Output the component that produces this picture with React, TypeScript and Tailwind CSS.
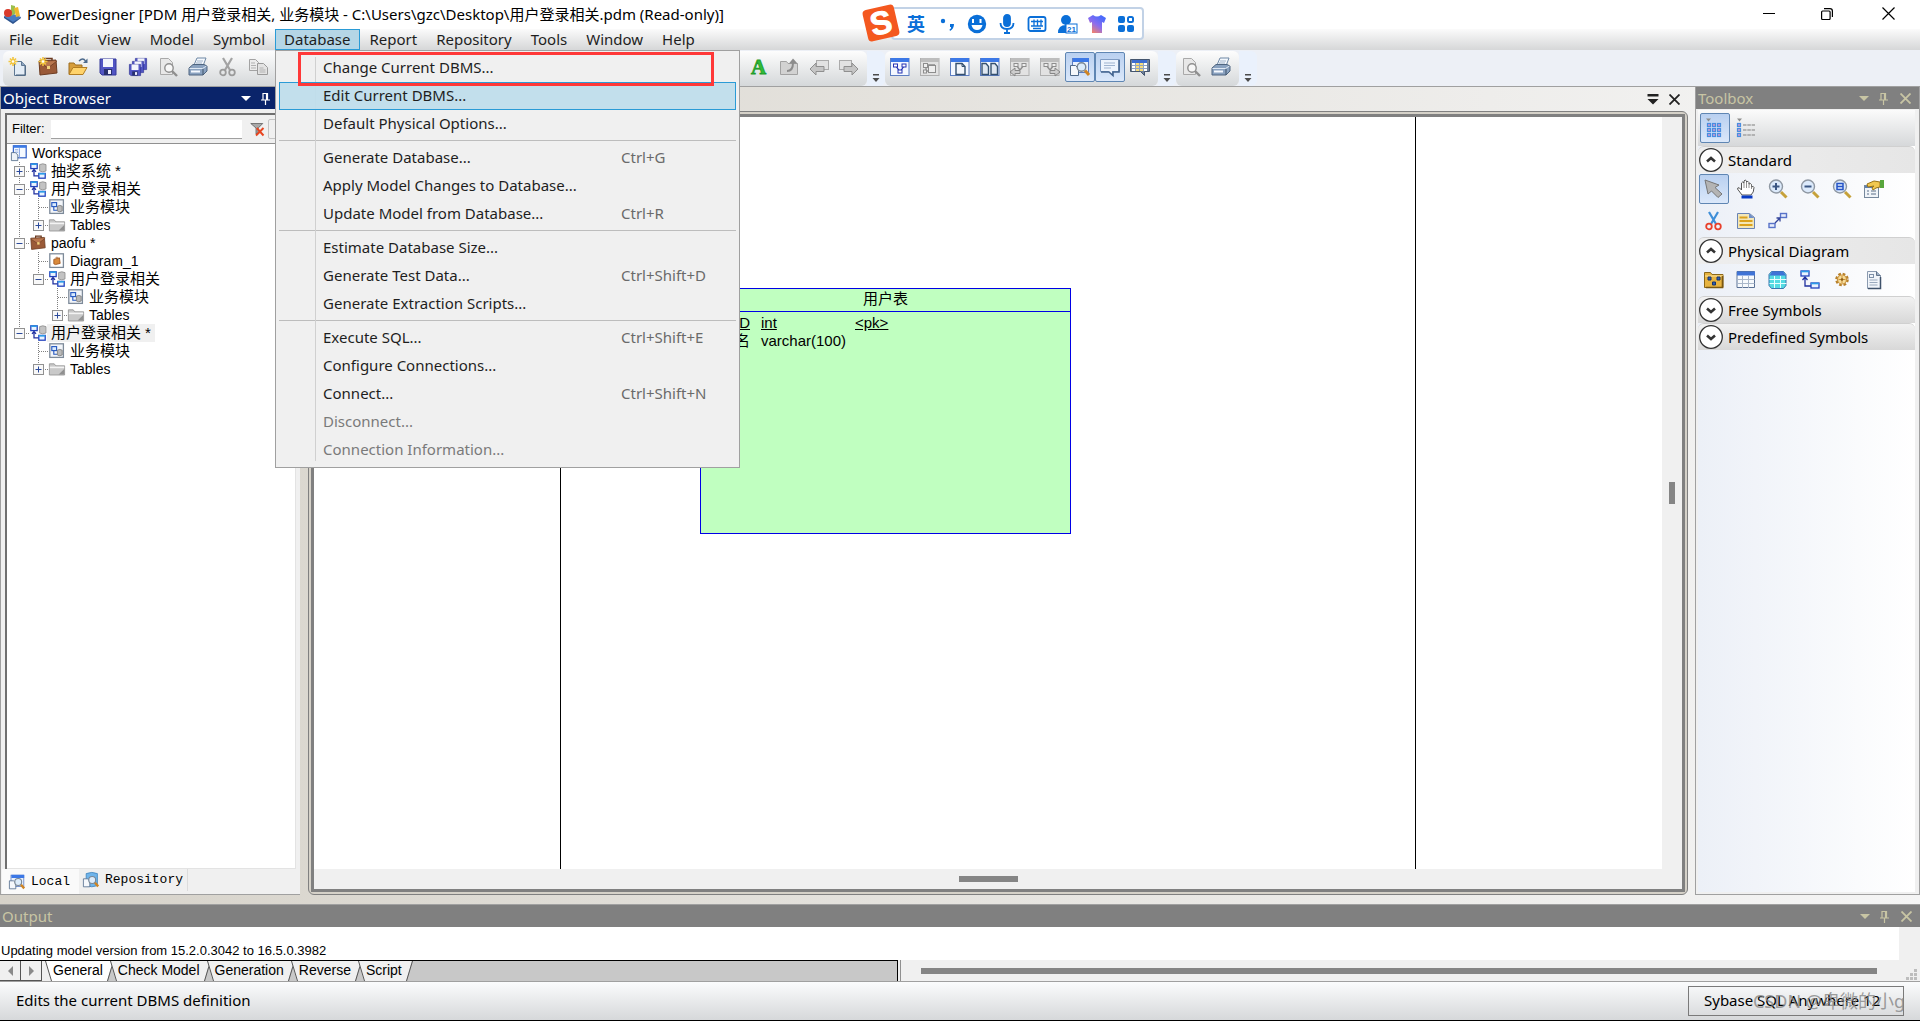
import type { ReactNode } from 'react';

const UI = "font-['Noto_Sans','Noto_Sans_CJK_SC',sans-serif]";
const ARIAL = "font-['Liberation_Sans','Noto_Sans_CJK_SC',sans-serif]";

/* ---------- icons ---------- */

function Svg({ children, size = 20 }: { children: ReactNode; size?: number }) {
  return (
    <svg width={size} height={size} viewBox="0 0 20 20" fill="none" className="shrink-0 overflow-visible">
      {children}
    </svg>
  );
}

const Spark = () => (
  <g stroke="#f2c53d" strokeWidth="1.600">
    <path d="M5 0v9M0.500 4.500h9M2 1.500l6 6M8 1.500l-6 6" />
    <circle cx="5" cy="4.500" r="1.300" fill="#fff" stroke="none" />
  </g>
);

const AppLogo = () => (
  <Svg size={20}>
    <path d="M2 12l7-3 10 4-8 6z" fill="#4a7cc0" />
    <path d="M2 12v2l9 6 8-6v-1l-8 5z" fill="#2d548f" />
    <path d="M9 1l4 1v8l-4 2z" fill="#9bbf4e" />
    <path d="M12 4l4-1 2 9-4 1z" fill="#f0b92e" />
    <circle cx="6" cy="9" r="4" fill="#d93a2b" />
  </Svg>
);

const NewDoc = () => (
  <Svg>
    <path d="M6.500 4.500h7l4 4v10h-11z" fill="#e4edf6" stroke="#5f7893" />
    <path d="M13.500 4.500v4h4" fill="#8fa6c0" stroke="#5f7893" />
    <path d="M17 9v9H8" stroke="#4a637f" />
    <Spark />
  </Svg>
);

function Case({ spark = false, size = 20 }: { spark?: boolean; size?: number }) {
  return (
    <Svg size={size}>
      <path d="M7 4V1.500h7V4" stroke="#6b3a20" strokeWidth="1.500" />
      <path d="M1 4l17-1 1 13-17 2z" fill="#9a5a38" stroke="#6d3c22" />
      <path d="M1 5l9 6 9-7" fill="#b9774f" stroke="#6d3c22" strokeWidth="0.800" />
      <rect x="9" y="9" width="3" height="3" fill="#f1d27c" />
      {spark && <Spark />}
    </Svg>
  );
}

const OpenFolder = () => (
  <Svg>
    <path d="M1 17V6h5l1.500 2H14v3" fill="#d69d3b" stroke="#9c6d1e" />
    <path d="M1 17.500l4-7h14l-4 7z" fill="#ffd36b" stroke="#b27d22" />
    <path d="M11 4q4-4 6.500 0" stroke="#4d6a8c" strokeWidth="1.400" />
    <path d="M19.500 1.500v4.500h-4.500z" fill="#4d6a8c" />
  </Svg>
);

const Floppy = () => (
  <>
    <path d="M2 2h16v16H4l-2-2z" fill="#5155c4" stroke="#34389a" />
    <rect x="5" y="2" width="10" height="8" fill="#f3f5fc" />
    <rect x="6" y="12" width="8" height="6" fill="#27306e" />
    <rect x="10" y="13" width="3" height="4" fill="#eef" />
  </>
);

const Save = () => (
  <Svg>
    <Floppy />
  </Svg>
);

const SaveAll = () => (
  <Svg>
    <g transform="translate(6 0) scale(.7)">
      <Floppy />
    </g>
    <g transform="translate(3 3) scale(.7)">
      <Floppy />
    </g>
    <g transform="translate(0 6) scale(.7)">
      <Floppy />
    </g>
  </Svg>
);

const Preview = () => (
  <Svg>
    <path d="M2.500 1.500h8l4 4v12h-12z" fill="#e8e8e8" stroke="#a9a9a9" />
    <circle cx="11" cy="11" r="4.200" fill="#f7f7f7" stroke="#8f8f8f" strokeWidth="1.400" />
    <path d="M14 14l5 5" stroke="#8f8f8f" strokeWidth="2.400" />
  </Svg>
);

const Printer = () => (
  <Svg>
    <path d="M6 8l3-7h9l-3 8z" fill="#f4f8fd" stroke="#6f88a5" />
    <path d="M9 4h6M8 6h6" stroke="#9fb2c9" />
    <path d="M1 11l4-3.500h11L19 9v5l-4 4H1z" fill="#8aa2c0" stroke="#4e6580" />
    <path d="M1.500 11.500h13l4-2.500" stroke="#dfe9f5" />
    <path d="M3 14.500h9" stroke="#f5f9ff" strokeWidth="2" />
    <path d="M15 12v6" stroke="#3e5269" />
  </Svg>
);

function Scissors({ blade = '#a3a3a3', handle = '#9b9b9b' }: { blade?: string; handle?: string }) {
  return (
    <Svg>
      <path d="M5 1l7 12M14 1L7 13" stroke={blade} strokeWidth="2.200" />
      <circle cx="5" cy="15.500" r="2.800" stroke={handle} strokeWidth="1.800" />
      <circle cx="14" cy="15.500" r="2.800" stroke={handle} strokeWidth="1.800" />
    </Svg>
  );
}

const Copy = () => (
  <Svg>
    <path d="M1.500 2.500h6l3 3v8h-9z" fill="#ececec" stroke="#a3a3a3" />
    <path d="M9.500 6.500h6l4 4v7h-10z" fill="#e3e3e3" stroke="#9a9a9a" />
    <path d="M3 6h4M3 8.500h5M3 11h5M11.500 11h4M11.500 13h6M11.500 15h6" stroke="#b1b1b1" />
  </Svg>
);

const FontA = () => (
  <Svg>
    <text x="2" y="17" fontSize="21" fontWeight="700" fontFamily="Liberation Serif" fill="#2fbd38" stroke="#1f9a29" strokeWidth="0.800">
      A
    </text>
  </Svg>
);

const FolderUp = () => (
  <Svg>
    <path d="M1.500 4.500h6l1.500 2h9.500v11h-17z" fill="#d2d2d2" stroke="#a2a2a2" />
    <path d="M8 14q6 0 6-8" stroke="#8c8c8c" strokeWidth="2" />
    <path d="M10 6.500l4-5 4.500 5z" fill="#8c8c8c" />
  </Svg>
);

function Shift({ flip = false }: { flip?: boolean }) {
  return (
    <Svg>
      <g transform={flip ? 'matrix(-1 0 0 1 20 0)' : undefined}>
        <rect x="7.500" y="3.500" width="12" height="9" fill="#e2e2e2" stroke="#ababab" />
        <path d="M1 12l6-6v3.500h8v5H7V18z" fill="#c5c5c5" stroke="#8f8f8f" />
      </g>
    </Svg>
  );
}

function Win({ gray = false, children }: { gray?: boolean; children?: ReactNode }) {
  return (
    <Svg>
      <rect x="0.500" y="1.500" width="18.500" height="17" fill={gray ? '#e2e2e2' : '#f4f8ff'} stroke={gray ? '#b0b0b0' : '#5d7ec2'} />
      <rect x="1" y="1" width="18" height="4" fill={gray ? '#bdbdbd' : '#3c78e6'} />
      {children}
    </Svg>
  );
}

const WinDiagram = () => (
  <Win>
    <path d="M6 9l4 6M14 9l-4 6" stroke="#2332b4" strokeWidth="1.300" />
    <rect x="3.500" y="7" width="4" height="3" fill="#fff" stroke="#2332b4" />
    <rect x="12" y="7" width="4" height="3" fill="#fff" stroke="#2332b4" />
    <rect x="8" y="13" width="4" height="3" fill="#fff" stroke="#2332b4" />
  </Win>
);

const WinGrid = () => (
  <Win gray>
    <path d="M5 8h10M5 14h10M6 8v7M14 8v7" stroke="#8d8d8d" strokeWidth="1.300" />
    <rect x="3.500" y="6.500" width="4" height="4" fill="#eee" stroke="#8d8d8d" />
    <rect x="3.500" y="13" width="3" height="3" fill="#eee" stroke="#8d8d8d" />
    <rect x="8.500" y="8.500" width="7" height="7" fill="#eee" stroke="#8d8d8d" />
  </Win>
);

const WinPage = () => (
  <Win>
    <path d="M6 6.500h6l3 3v8H6z" fill="#f3f6fb" stroke="#34506f" strokeWidth="1.400" />
    <path d="M12 6.500v3h3" stroke="#34506f" />
  </Win>
);

const WinPages = () => (
  <Win>
    <path d="M2 6.500h4l2.500 3v8H2zM11 6.500h4l2.500 3v8H11z" fill="#dfe7f1" stroke="#34506f" strokeWidth="1.400" />
  </Win>
);

function WinArrow({ flip = false }: { flip?: boolean }) {
  return (
    <Win gray>
      <path d="M6 8l4 5M14 8l-4 5" stroke="#8d8d8d" strokeWidth="1.400" />
      <rect x="4" y="6.500" width="4" height="3" fill="#eee" stroke="#8d8d8d" />
      <rect x="12" y="6.500" width="4" height="3" fill="#eee" stroke="#8d8d8d" />
      <g transform={flip ? 'matrix(-1 0 0 1 20 0)' : undefined}>
        <path d="M0 15l5-4v2.500h5v3H5V19z" fill="#cdcdcd" stroke="#868686" />
      </g>
    </Win>
  );
}

function Magnify({ barrel = false, size = 20 }: { barrel?: boolean; size?: number }) {
  return (
    <Svg size={size}>
      {barrel ? (
        <path d="M4 2q7-3 14 0v15q-7 3-14 0z" fill="#6fb4ea" stroke="#3d83bd" />
      ) : (
        <>
          <rect x="2.500" y="1.500" width="16" height="14" fill="#eaf1fc" stroke="#5d7ec2" />
          <rect x="3" y="1" width="16" height="4" fill="#3c78e6" />
        </>
      )}
      <path d="M0.500 8.500h5l3 3v7h-8z" fill="#f5f8fc" stroke="#4f6a8a" />
      <circle cx="11.500" cy="10" r="4.300" fill="#dcecfb" stroke="#7a8794" strokeWidth="1.400" />
      <path d="M15 13.500l4 4.500" stroke="#cf8424" strokeWidth="3" />
    </Svg>
  );
}

const Note = () => (
  <Svg>
    <path d="M0.500 2.500h19v12h-7v4l-4-4h-8z" fill="#eef4fd" stroke="#7f9cc4" />
    <path d="M19 3v12h-6v3.500l-4-3.500H1" stroke="#44648f" strokeWidth="1.600" />
    <path d="M4 6h11M4 8.500h11M4 11h7" stroke="#9fb3cf" />
  </Svg>
);

const SheetTable = () => (
  <Svg>
    <path d="M0.500 2.500h19v12h-5v4l-4-4H.5z" fill="#6f8099" stroke="#44556d" />
    <rect x="2" y="3" width="15" height="11" fill="#fff" />
    <rect x="2" y="3" width="15" height="3" fill="#3d6dd0" />
    <path d="M6 6h7v8H6z" fill="#f6dc7d" />
    <path d="M2 8.500h15M2 11.500h15M5.500 6v8M9.500 6v8M13.500 6v8" stroke="#8fa4c4" />
  </Svg>
);

function PdmModel({ size = 16 }: { size?: number }) {
  return (
    <Svg size={size}>
      <path d="M12 2q4-2 8 0v8q-4 2-8 0z" fill="#c3c3c3" stroke="#8b8b8b" />
      <rect x="1" y="1" width="8" height="6" fill="#e9f3ff" stroke="#2141bd" strokeWidth="1.600" />
      <path d="M1 1.500h8" stroke="#2c9be8" strokeWidth="2" />
      <path d="M5 8v8h6M2.500 11L5 8l2.500 3" stroke="#20309f" strokeWidth="1.600" />
      <rect x="11" y="13" width="8" height="6" fill="#e9f3ff" stroke="#2141bd" strokeWidth="1.600" />
      <path d="M11 13.500h8" stroke="#2c9be8" strokeWidth="2" />
    </Svg>
  );
}

const DiagramIcon = () => (
  <Svg size={16}>
    <rect x="1" y="1" width="17" height="17" fill="#f2f5f9" stroke="#7d8a99" strokeWidth="1.600" />
    <rect x="3.500" y="4.500" width="6" height="5" fill="#d9ebff" stroke="#2457c0" strokeWidth="1.400" />
    <path d="M6 10v4h4" stroke="#2457c0" strokeWidth="1.400" />
    <path d="M10.500 9q3-2 6 0v6q-3 2-6 0z" fill="#b9b9b9" stroke="#777" />
  </Svg>
);

const CaseDiagram = () => (
  <Svg size={16}>
    <rect x="1" y="1" width="17" height="17" fill="#fff" stroke="#7d8a99" strokeWidth="1.600" />
    <path d="M6 8l7-2 1 7-6 1.500-2-1z" fill="#d98a3c" stroke="#9a4e17" />
    <path d="M8 6.500q1-2 3-1" stroke="#9a4e17" />
  </Svg>
);

const GrayFolder = () => (
  <Svg size={16}>
    <path d="M0.500 17.500V3.500h6l2 2.500h11v11.500z" fill="#c9c9c9" stroke="#8f8f8f" />
    <path d="M1 8h18" stroke="#f3f3f3" strokeWidth="2" />
    <path d="M12 17l7-7v7z" fill="#909090" />
  </Svg>
);

const WorkspaceIcon = () => (
  <Svg size={16}>
    <rect x="3" y="1" width="16" height="15" fill="#f6faff" stroke="#3b67c9" strokeWidth="1.600" />
    <path d="M3 2h16" stroke="#3b7be6" strokeWidth="3" />
    <path d="M10.500 4v12M5 6h4M5 9h4" stroke="#7d9ede" strokeWidth="1.200" />
    <path d="M0.500 9.500h5l3 3v7h-8z" fill="#eef3f8" stroke="#4a6583" />
  </Svg>
);

const FilterOff = () => (
  <Svg size={15}>
    <path d="M1 2h16l-6 6v6l-3 2V8z" fill="#a8a8a8" stroke="#5a5a5a" />
    <path d="M9 8l9 10M18 8L8 18" stroke="#e8451f" strokeWidth="2.600" />
  </Svg>
);

const Cursor = () => (
  <Svg>
    <path d="M1 1l3 14 3.500-3 6.500 6.500 4-3.500-7-6.500L15 6z" fill="#b4b4b4" stroke="#767676" />
  </Svg>
);

const Hand = () => (
  <Svg>
    <path
      d="M6 16L1.500 10q0-2 2-1L5.500 11V4q1-2 2.500 0V2q1-2 2.500 0v1q1.500-1.500 2.500.500V5q2-1 2.500.500V8q2-1.500 2.500.500 0 5-3 7.500z"
      fill="#fff"
      stroke="#555"
    />
    <path d="M8 4v5M10.500 3v6M13 4v5M15.500 6v4" stroke="#777" strokeWidth="0.800" />
    <path d="M5.500 16.500h11v3h-11z" fill="#0a3bc4" />
  </Svg>
);

function Zoom({ mode }: { mode: 'in' | 'out' | 'fit' }) {
  return (
    <Svg>
      <path d="M13 13l5.500 5.500" stroke="#c6a13a" strokeWidth="3" />
      <circle cx="8" cy="7.500" r="6.500" fill="#dceafb" stroke="#8f98a3" strokeWidth="1.400" />
      {mode === 'fit' ? (
        <path d="M5 4.500h6v6H5zM5 7.500h6" stroke="#2554c7" strokeWidth="1.500" />
      ) : (
        <path d="M4.500 7.500h7" stroke="#3a5683" strokeWidth="2" />
      )}
      {mode === 'in' && <path d="M8 4v7" stroke="#3a5683" strokeWidth="2" />}
    </Svg>
  );
}

const Props = () => (
  <Svg>
    <rect x="0.500" y="6.500" width="14" height="12" fill="#f0f4f9" stroke="#76889d" />
    <path d="M1 8h14" stroke="#5e7fae" strokeWidth="2" />
    <path d="M3 12h2M3 15h2M7 12h5M7 15h5" stroke="#8c9bad" strokeWidth="1.400" />
    <path d="M3 5l7-3 6 1v5l-4 1-3 2-1-2 2-2-6 1z" fill="#f2c84f" stroke="#9b7417" />
    <rect x="16" y="1" width="4" height="8" fill="#58a63c" />
  </Svg>
);

const FileText = () => (
  <Svg>
    <path d="M1.500 2.500h12l5 4v11h-17z" fill="#f3e7b8" stroke="#6883b5" />
    <path d="M13 2.500v4.500h5.500z" fill="#6f8fca" />
    <path d="M3.500 6.500h8M3.500 10h13M3.500 14h13" stroke="#dba21d" strokeWidth="1.800" />
  </Svg>
);

const LinkIcon = () => (
  <Svg>
    <rect x="12.500" y="2.500" width="6" height="4" fill="#e6ecfb" stroke="#5872c8" strokeWidth="1.400" />
    <rect x="1" y="12.500" width="6" height="4" fill="#e6ecfb" stroke="#5872c8" strokeWidth="1.400" />
    <path d="M7 12l5-5M8.500 7H12v3.500" stroke="#33449a" strokeWidth="1.300" />
  </Svg>
);

const PackageIcon = () => (
  <Svg>
    <path d="M0.500 17.500v-15h6l1.500 2h11v13z" fill="#e8b440" stroke="#8c6718" />
    <path d="M1 6h18" stroke="#fbe3a0" />
    <path d="M18.500 6v11.500H2" stroke="#7a5812" strokeWidth="1.600" />
    <path d="M4 7h3v3H4zM13 7h3v3h-3zM8.500 12h3v3h-3z" fill="#2f5eb5" stroke="#1b3468" />
  </Svg>
);

function TableIcon({ view = false }: { view?: boolean }) {
  return (
    <Svg>
      <path
        d={view ? 'M3.500 1.500h12l2.500 3v11l-2.500 3h-12l-2.500-3v-11z' : 'M1 1.500h17.500v16H1z'}
        fill={view ? '#54dbe2' : '#f7fafd'}
        stroke={view ? '#3b75ae' : '#5b7296'}
      />
      <path d={view ? 'M4 1.500h11l3 4H1.500z' : 'M1 1.500h18v4H1z'} fill="#3f73d6" />
      <path d="M1.500 9.500h17M1.500 13.500h17M6.500 6v12M12.500 6v12" stroke={view ? '#e6ffff' : '#a9b7ca'} />
    </Svg>
  );
}

const Reference = () => (
  <Svg>
    <rect x="1" y="1" width="8" height="5" fill="#e9f3ff" stroke="#2141bd" strokeWidth="1.300" />
    <path d="M1 1.500h8" stroke="#2c9be8" strokeWidth="1.600" />
    <path d="M5 7v9h6M2.500 10L5 7l2.500 3" stroke="#20309f" strokeWidth="1.300" />
    <rect x="11" y="13" width="8" height="5" fill="#e9f3ff" stroke="#2141bd" strokeWidth="1.300" />
    <path d="M11 13.500h8" stroke="#2c9be8" strokeWidth="1.600" />
  </Svg>
);

const Gear = () => (
  <Svg>
    <circle cx="10" cy="9.500" r="5.500" stroke="#b67f2a" strokeWidth="2.600" strokeDasharray="2.600 1.720" />
    <circle cx="10" cy="9.500" r="4.500" fill="#f8dd9a" stroke="#c8913a" strokeWidth="1.200" />
    <path d="M10 6v7M6.500 9.500h7" stroke="#c8913a" />
    <circle cx="10" cy="9.500" r="1.300" fill="#8c5c16" />
  </Svg>
);

const FileIcon = () => (
  <Svg>
    <path d="M3.500 1.500h9l4 4v13h-13z" fill="#f1f5fa" stroke="#8b9bb0" />
    <path d="M12.500 1.500v4h4" fill="#9db0c6" stroke="#64748a" />
    <rect x="5.500" y="4.500" width="4" height="3" stroke="#7e90a8" />
    <path d="M5.500 10h8M5.500 12.500h8M5.500 15h8" stroke="#9aa9bd" />
    <path d="M16.500 7v11.500H4" stroke="#3f526b" strokeWidth="1.500" />
  </Svg>
);

function Dots({ list = false }: { list?: boolean }) {
  const cols = list ? [1] : [2, 7, 12];
  return (
    <Svg>
      <path d="M1 0.500h5l-2.500 3z" fill="#8d8d8d" />
      {[5, 10, 15].map((y) => (
        <g key={y}>
          {cols.map((x) => (
            <rect key={x} x={x + 0.5} y={y + 0.5} width="3" height="3" fill="#c99ad0" stroke="#4a8ee0" strokeWidth="1.200" />
          ))}
          {list && <path d={`M7 ${y + 2}h12`} stroke="#a2a2a2" strokeWidth="1.600" strokeDasharray="3.500 .8" />}
        </g>
      ))}
    </Svg>
  );
}

const Caret = () => (
  <svg width="10" height="5" viewBox="0 0 10 5" fill="currentColor">
    <path d="M0 0h10L5 5z" />
  </svg>
);

const Pin = () => (
  <svg width="9" height="13" viewBox="0 0 9 13" fill="none" stroke="currentColor">
    <path d="M2 1.500h4.500M2 1v6.500M5.500 1v6.500M6.500 1v6.500M0 8h9M4.500 8v5" strokeWidth="1.200" />
  </svg>
);

const Cross = () => (
  <svg width="11" height="11" viewBox="0 0 11 11" fill="none" stroke="currentColor" strokeWidth="1.800">
    <path d="M0.500 0.500l10 10M10.500 0.500l-10 10" />
  </svg>
);

/* ---------- title, menu and tool bars ---------- */

function TitleBar() {
  return (
    <header className="h-[29px] shrink-0 bg-white flex items-center pl-0.5 pb-0.5 gap-[5px]">
      <AppLogo />
      <h1 className="text-[15px] leading-5 whitespace-nowrap">
        PowerDesigner [PDM 用户登录相关, 业务模块 - C:\Users\gzc\Desktop\用户登录相关.pdm (Read-only)]
      </h1>
      <div className="ml-auto flex items-center">
        <button aria-label="Minimize" className="w-[58px] h-7 flex items-center justify-center">
          <svg width="12" height="12" stroke="#000">
            <path d="M0 5.500h12" />
          </svg>
        </button>
        <button aria-label="Restore" className="w-[58px] h-7 flex items-center justify-center">
          <svg width="12" height="12" viewBox="0 0 12 12" fill="none" stroke="#000" strokeWidth="1.200">
            <rect x="0.600" y="3" width="8.500" height="8.500" rx="1" />
            <path d="M3 0.700h6q2.400 0 2.400 2.400v6" />
          </svg>
        </button>
        <button aria-label="Close" className="w-16 h-7 flex items-center justify-center">
          <svg width="13" height="13" viewBox="0 0 13 13" stroke="#000" strokeWidth="1.200">
            <path d="M0.500 0.500l12 12M12.500 0.500l-12 12" />
          </svg>
        </button>
      </div>
    </header>
  );
}

interface MenuEntry {
  label: string;
  keys?: string;
  disabled?: boolean;
  active?: boolean;
}

const DATABASE_MENU: MenuEntry[][] = [
  [
    { label: 'Change Current DBMS...' },
    { label: 'Edit Current DBMS...', active: true },
    { label: 'Default Physical Options...' },
  ],
  [
    { label: 'Generate Database...', keys: 'Ctrl+G' },
    { label: 'Apply Model Changes to Database...' },
    { label: 'Update Model from Database...', keys: 'Ctrl+R' },
  ],
  [
    { label: 'Estimate Database Size...' },
    { label: 'Generate Test Data...', keys: 'Ctrl+Shift+D' },
    { label: 'Generate Extraction Scripts...' },
  ],
  [
    { label: 'Execute SQL...', keys: 'Ctrl+Shift+E' },
    { label: 'Configure Connections...' },
    { label: 'Connect...', keys: 'Ctrl+Shift+N' },
    { label: 'Disconnect...', disabled: true },
    { label: 'Connection Information...', disabled: true },
  ],
];

function DatabaseMenu() {
  return (
    <div className="absolute left-0 top-full z-20 w-[465px] bg-[#f0f0f0] border border-[#a0a0a0] p-[3px]" role="menu">
      <div className="absolute left-[39px] top-1.5 bottom-1.5 w-px bg-[#d0d0d0]" />
      {DATABASE_MENU.map((group, i) => (
        <div key={i} className={i > 0 ? 'mt-0.5 border-t border-[#bdbdbd] pt-[3px]' : ''}>
          {group.map((item) => (
            <button
              key={item.label}
              role="menuitem"
              disabled={item.disabled}
              className={`relative flex items-center w-full h-7 pl-[43px] pb-0.5 border text-left whitespace-nowrap ${
                item.active ? 'bg-[#bfddeb]/95 border-[#2a9bd6]' : 'border-transparent'
              } ${item.disabled ? 'text-[#7a7a7a]' : 'text-[#1e1e1e]'}`}
            >
              <span className="w-[298px]">{item.label}</span>
              <span className="text-[#6a6a6a]">{item.keys}</span>
            </button>
          ))}
        </div>
      ))}
      {/* Marker round the first entry */}
      <div className="absolute left-[22px] top-px w-[416px] h-[34px] border-[3px] border-[#ff3838] pointer-events-none" />
    </div>
  );
}

const MENUS = ['File', 'Edit', 'View', 'Model', 'Symbol', 'Database', 'Report', 'Repository', 'Tools', 'Window', 'Help'];

function MenuBar() {
  return (
    <nav className="h-[21px] shrink-0 flex gap-px bg-linear-to-b from-[#fbfbfb] to-[#d6d7d8] text-[15px] leading-5">
      {MENUS.map((m) => (
        <div key={m} className="relative">
          <button
            className={`h-[21px] px-2 pb-0.5 border flex items-center ${
              m === 'Database' ? 'bg-[#b5d6e6] border-[#2a9bd6]' : 'border-transparent'
            } text-[#1e1e1e]`}
          >
            {m}
          </button>
          {m === 'Database' && <DatabaseMenu />}
        </div>
      ))}
    </nav>
  );
}

interface Tool {
  name: string;
  icon: ReactNode;
  on?: boolean;
}

function ToolButtons({ tools }: { tools: Tool[] }) {
  return (
    <>
      {tools.map((t) => (
        <button
          key={t.name}
          aria-label={t.name}
          className={`size-[30px] flex items-center justify-center rounded-xs border ${
            t.on ? 'bg-linear-to-b from-[#b9d0f0] to-[#dbe8fa] border-[#5f86b3]' : 'border-transparent'
          }`}
        >
          {t.icon}
        </button>
      ))}
    </>
  );
}

const FILE_TOOLS: Tool[] = [
  { name: 'New', icon: <NewDoc /> },
  { name: 'New Project', icon: <Case spark /> },
  { name: 'Open', icon: <OpenFolder /> },
  { name: 'Save', icon: <Save /> },
  { name: 'Save All', icon: <SaveAll /> },
  { name: 'Print Preview', icon: <Preview /> },
  { name: 'Print', icon: <Printer /> },
  { name: 'Cut', icon: <Scissors /> },
  { name: 'Copy', icon: <Copy /> },
];

const FORMAT_TOOLS: Tool[] = [
  { name: 'Font', icon: <FontA /> },
  { name: 'Open Parent', icon: <FolderUp /> },
  { name: 'Previous', icon: <Shift /> },
  { name: 'Next', icon: <Shift flip /> },
];

const VIEW_TOOLS: Tool[] = [
  { name: 'Diagram', icon: <WinDiagram /> },
  { name: 'Grid', icon: <WinGrid /> },
  { name: 'Page View', icon: <WinPage /> },
  { name: 'All Pages', icon: <WinPages /> },
  { name: 'Previous View', icon: <WinArrow /> },
  { name: 'Next View', icon: <WinArrow flip /> },
  { name: 'Browser', icon: <Magnify />, on: true },
  { name: 'Output', icon: <Note />, on: true },
  { name: 'Result List', icon: <SheetTable /> },
];

const PRINT_TOOLS: Tool[] = [
  { name: 'Preview Page', icon: <Preview /> },
  { name: 'Print Page', icon: <Printer /> },
];

const BAND = 'h-[35px] flex items-center rounded-md bg-linear-to-b from-[#fdfdfd] to-[#d5d8da] pb-1';

function Overflow() {
  return (
    <button aria-label="More" className="w-[18px] h-[35px] flex items-end justify-center pb-1 bg-[#eaf1fc] rounded-r-md text-[#4b4b4b]">
      <svg width="8" height="8" viewBox="0 0 8 8" fill="currentColor">
        <path d="M1 0h6v1.500H1zM0.500 4h7L4 8z" />
      </svg>
    </button>
  );
}

function ToolBars() {
  return (
    <div className="h-[37px] shrink-0 flex items-start bg-[#edf0f6] border-b border-[#a0a0a0] pl-[3px] pt-px">
      <div className={`${BAND} w-[864px]`}>
        <ToolButtons tools={FILE_TOOLS} />
        <div className="ml-auto flex pr-[3px]">
          <ToolButtons tools={FORMAT_TOOLS} />
        </div>
      </div>
      <Overflow />
      <div className={`${BAND} pr-[3px]`}>
        <ToolButtons tools={VIEW_TOOLS} />
      </div>
      <Overflow />
      <div className={`${BAND} pr-[3px]`}>
        <ToolButtons tools={PRINT_TOOLS} />
      </div>
      <Overflow />
    </div>
  );
}

/* Input method bar floating over the window */
function ImeBar() {
  return (
    <div className="absolute left-[862px] top-1 z-30 flex items-center text-[#0a6fd8]">
      <svg width="38" height="38" viewBox="0 0 38 38" className="z-10 overflow-visible">
        <g transform="rotate(-13 19 19)">
          <rect x="3" y="3" width="32" height="32" rx="4" fill="#f4581f" />
          <text x="19" y="30" textAnchor="middle" fontSize="32" fontWeight="700" fontFamily="Liberation Sans" fill="#fff" stroke="#fff">
            S
          </text>
        </g>
      </svg>
      <div className="flex items-center gap-2.5 h-[33px] mt-px w-[253px] -ml-[9px] pl-[14px] bg-white border-2 border-[#c2d2e6] rounded-sm">
        <span className="w-5 text-[18px] leading-6 font-bold">英</span>
        <svg width="20" height="20" viewBox="0 0 20 20" fill="currentColor">
          <circle cx="6" cy="7" r="2.200" />
          <path d="M13 10h4q0 5-4 7l-.5-1.500q2-1 1.500-2.500h-1z" />
        </svg>
        <svg width="20" height="20" viewBox="0 0 20 20" fill="currentColor">
          <circle cx="10" cy="10" r="9.200" />
          <path d="M6 5v4M13.500 5v4" stroke="#fff" strokeWidth="2" />
          <path d="M4.500 11h11q-1 5-5.500 5t-5.500-5z" fill="#fff" />
        </svg>
        <svg width="20" height="20" viewBox="0 0 20 20" fill="none" stroke="currentColor" strokeWidth="1.800">
          <rect x="7" y="1" width="6" height="11" rx="3" fill="currentColor" />
          <path d="M3.500 9q0 6 6.500 6t6.500-6M10 15v4M7 19h6" />
        </svg>
        <svg width="20" height="20" viewBox="0 0 20 20" fill="none" stroke="currentColor" strokeWidth="1.800">
          <rect x="1.500" y="3" width="17" height="14" rx="2" />
          <path d="M4 7.500h12M4 12h12M7 5.500v7M10.500 5.500v7M14 5.500v7M6 14.500h8" strokeWidth="1.300" />
        </svg>
        <svg width="20" height="20" viewBox="0 0 20 20" fill="currentColor" className="overflow-visible">
          <circle cx="9" cy="6" r="5" />
          <path d="M1 19q0-8 8-8v8z" />
          <rect x="9" y="10" width="11" height="9" fill="#fff" stroke="currentColor" />
          <text x="10" y="18" fontSize="8" fontWeight="700" fontFamily="Liberation Sans">
            21
          </text>
        </svg>
        <svg width="20" height="20" viewBox="0 0 20 20">
          <defs>
            <linearGradient id="shirt" x1="1" y1="0" x2="0.300" y2="1">
              <stop offset="0.200" stopColor="#4b6bfb" />
              <stop offset="0.600" stopColor="#8a6cf0" />
              <stop offset="1" stopColor="#f0826e" />
            </linearGradient>
          </defs>
          <path d="M6 1q4 3 8 0l5 3-2 5-2-1v11H5V8L3 9 1 4z" fill="url(#shirt)" />
        </svg>
        <svg width="18" height="18" viewBox="0 0 18 18" fill="currentColor">
          <rect x="1" y="1" width="7" height="7" rx="2" />
          <rect x="11" y="2" width="5" height="5" rx="1.500" fill="none" stroke="currentColor" strokeWidth="2" />
          <rect x="1" y="10" width="7" height="7" rx="2" />
          <rect x="10" y="10" width="7" height="7" rx="2" />
        </svg>
      </div>
    </div>
  );
}

/* ---------- object browser ---------- */

// Guide cells: '|' line, 't' branch, '+'/'-' box with siblings below, 'P'/'M' box on the last sibling
function Guide({ kind }: { kind: string }) {
  const box = '+-PM'.includes(kind);
  const plus = kind === '+' || kind === 'P';
  const last = kind === 'P' || kind === 'M';
  return (
    <svg width="19" height="18" viewBox="0 0 19 18" fill="none" className="shrink-0">
      {kind !== ' ' && <path d={last ? 'M9.500 0v9' : 'M9.500 0v18'} stroke="#808080" strokeDasharray="1 1" />}
      {kind !== ' ' && kind !== '|' && <path d="M10 9.500h9" stroke="#808080" strokeDasharray="1 1" />}
      {box && <rect x="4.500" y="4.500" width="10" height="10" fill="#f8f8f8" stroke="#919191" />}
      {box && <path d={plus ? 'M6.500 9.500h6M9.500 6.500v6' : 'M6.500 9.500h6'} stroke="#2b4a9b" />}
    </svg>
  );
}

interface TreeNode {
  guides: string;
  icon: ReactNode;
  label: string;
  cjk?: boolean;
  dirty?: boolean;
  selected?: boolean;
}

const TREE: TreeNode[] = [
  { guides: '', icon: <WorkspaceIcon />, label: 'Workspace' },
  { guides: '+', icon: <PdmModel />, label: '抽奖系统', cjk: true, dirty: true },
  { guides: '-', icon: <PdmModel />, label: '用户登录相关', cjk: true },
  { guides: '|t', icon: <DiagramIcon />, label: '业务模块', cjk: true },
  { guides: '|P', icon: <GrayFolder />, label: 'Tables' },
  { guides: '-', icon: <Case size={16} />, label: 'paofu', dirty: true },
  { guides: '|t', icon: <CaseDiagram />, label: 'Diagram_1' },
  { guides: '|M', icon: <PdmModel />, label: '用户登录相关', cjk: true },
  { guides: '| t', icon: <DiagramIcon />, label: '业务模块', cjk: true },
  { guides: '| P', icon: <GrayFolder />, label: 'Tables' },
  { guides: 'M', icon: <PdmModel />, label: '用户登录相关', cjk: true, dirty: true, selected: true },
  { guides: ' t', icon: <DiagramIcon />, label: '业务模块', cjk: true },
  { guides: ' P', icon: <GrayFolder />, label: 'Tables' },
];

function PaneTitle({ title, active = false, closable = false }: { title: string; active?: boolean; closable?: boolean }) {
  return (
    <div
      className={`h-[22px] shrink-0 flex items-center gap-2.5 pl-0.5 pr-2 text-[15px] leading-5 ${
        active ? 'bg-[#0a246a] text-white' : 'bg-[#808080] text-[#c8c5a4]'
      }`}
    >
      <h2 className="flex-1 pb-px">{title}</h2>
      <button aria-label="Options">
        <Caret />
      </button>
      <button aria-label="Pin">
        <Pin />
      </button>
      {closable && (
        <button aria-label="Close pane" className="ml-0.5">
          <Cross />
        </button>
      )}
    </div>
  );
}

function ObjectBrowser() {
  return (
    <aside className="w-[300px] shrink-0 mb-[9px] flex flex-col bg-[#f0f0f0] border-l border-b border-[#a0a0a0]">
      <div className="flex">
        <div className="w-[277px]">
          <PaneTitle title="Object Browser" active />
        </div>
        <div className="flex-1 bg-[#0a246a]" />
      </div>
      <div className={`flex-1 min-h-0 flex flex-col mt-1 ml-1 mr-1 border-l-2 border-t-2 border-[#6f6f6f] ${ARIAL}`}>
        <div className="h-7 shrink-0 flex items-center pl-[5px]">
          <label htmlFor="filter" className="w-[39px] text-[13px] leading-4">
            Filter:
          </label>
          <input id="filter" className="w-[191px] h-[19px] bg-white border-b border-[#a0a0a0] px-1 text-[13px] outline-none" />
          <button aria-label="Clear filter" className="ml-2">
            <FilterOff />
          </button>
          <button aria-label="Filter options" className="ml-[3px] w-5 h-5 border border-[#c4c4c4] rounded-xs" />
        </div>
        <ul className="flex-1 min-h-0 overflow-hidden bg-white border-t border-r border-b border-[#909090] border-r-[#e3e3e3] border-b-[#e3e3e3] pl-[3px] text-sm">
          {TREE.map((n, i) => (
            <li key={i} className="h-[18px] flex items-center">
              {n.guides.split('').map((g, j) => (
                <Guide key={j} kind={g} />
              ))}
              <span className="w-[18px] pl-px flex shrink-0">{n.icon}</span>
              <span
                className={`px-1 flex gap-1 whitespace-nowrap ${n.cjk ? 'text-[15px] leading-[18px]' : 'leading-[18px]'} ${
                  n.selected ? 'bg-[#f0f0f0]' : ''
                }`}
              >
                {n.label}
                {n.dirty && <span>*</span>}
              </span>
            </li>
          ))}
        </ul>
      </div>
      <div className="h-[25px] shrink-0 flex items-start pl-px font-['Liberation_Mono','Liberation_Mono',monospace] text-[13px] leading-4">
        <button className="h-[25px] w-[77px] pl-[7px] flex items-center gap-1.5 bg-[#fafafa]">
          <Magnify size={16} />
          Local
        </button>
        <button className="h-[22px] pl-1 pr-1 flex items-center gap-1.5 border-r border-[#dcdcdc]">
          <Magnify barrel size={16} />
          Repository
        </button>
      </div>
    </aside>
  );
}

/* ---------- document ---------- */

const COLUMNS = [
  { name: '用户ID', type: 'int', key: '<pk>' },
  { name: '用户名', type: 'varchar(100)', key: '' },
];

function EntitySymbol() {
  return (
    <table
      className={`absolute left-[386px] top-[171px] w-[371px] h-[222px] table-fixed bg-[#c0ffc0] outline outline-1 -outline-offset-1 outline-[#0000e6] text-[15px] leading-[18px] ${ARIAL}`}
    >
      <caption className="h-6 leading-5 bg-[#c0ffc0] border border-[#0000e6]">用户表</caption>
      <tbody className="align-top">
        {COLUMNS.map((c, i) => (
          <tr key={c.name} className={i === 0 ? 'h-[19px] underline' : ''}>
            <td className={`w-[61px] pl-[5px] ${i === 0 ? 'pt-0.5' : ''}`}>{c.name}</td>
            <td className={`w-[94px] ${i === 0 ? 'pt-0.5' : ''}`}>{c.type}</td>
            <td className={i === 0 ? 'pt-0.5' : ''}>{c.key}</td>
          </tr>
        ))}
      </tbody>
    </table>
  );
}

function DocumentArea() {
  return (
    <main className="flex-1 min-w-0 ml-2 mb-[9px] flex flex-col">
      <div className="h-6 shrink-0 flex items-center justify-end gap-2.5 pr-2 text-[#222]">
        <button aria-label="Window list">
          <svg width="12" height="12" viewBox="0 0 12 12" fill="currentColor">
            <path d="M0.500 1h11v2.500h-11zM0.500 6h11L6 11.500z" />
          </svg>
        </button>
        <button aria-label="Close document">
          <Cross />
        </button>
      </div>
      <div className="flex-1 min-h-0 flex flex-col rounded-md border border-[#808080] bg-[#d5d1c8] p-0.5">
        <div className="flex-1 min-h-0 grid grid-cols-[1fr_20px] grid-rows-[1fr_20px] border-[3px] border-[#808080] bg-[#f0f0f0]">
          <div className="relative overflow-hidden bg-white">
            <div className="absolute left-[246px] -top-px -bottom-px w-[856px] border-x border-black" />
            <EntitySymbol />
          </div>
          <div className="flex items-center justify-center">
            <div className="w-1.5 h-[22px] bg-[#858585]" />
          </div>
          <div className="flex items-center justify-center">
            <div className="w-[59px] h-1.5 bg-[#858585]" />
          </div>
        </div>
      </div>
    </main>
  );
}

/* ---------- toolbox ---------- */

const STANDARD: Tool[] = [
  { name: 'Pointer', icon: <Cursor />, on: true },
  { name: 'Grabber', icon: <Hand /> },
  { name: 'Zoom In', icon: <Zoom mode="in" /> },
  { name: 'Zoom Out', icon: <Zoom mode="out" /> },
  { name: 'Open Diagram', icon: <Zoom mode="fit" /> },
  { name: 'Properties', icon: <Props /> },
  { name: 'Delete', icon: <Scissors blade="#3f8fd8" handle="#e8402c" /> },
  { name: 'File Note', icon: <FileText /> },
  { name: 'Link', icon: <LinkIcon /> },
];

const PHYSICAL: Tool[] = [
  { name: 'Package', icon: <PackageIcon /> },
  { name: 'Table', icon: <TableIcon /> },
  { name: 'View', icon: <TableIcon view /> },
  { name: 'Reference', icon: <Reference /> },
  { name: 'Procedure', icon: <Gear /> },
  { name: 'File', icon: <FileIcon /> },
];

function Section({ title, tools }: { title: string; tools?: Tool[] }) {
  return (
    <section>
      <h3>
        <button
          aria-expanded={!!tools}
          className={`w-full h-[27px] flex items-center gap-[5px] pl-px border-t border-[#d0d0d0] rounded-t-md text-left text-[15px] leading-5 ${
            tools ? 'bg-linear-to-r from-[#eeeeee] to-[#e6e6e6]' : 'bg-linear-to-b from-[#f2f2f2] to-[#d8d8d8]'
          }`}
        >
          <svg width="24" height="24" viewBox="0 0 24 24" fill="none" stroke="#333" className="shrink-0">
            <circle cx="12" cy="12" r="11.300" fill="#fff" strokeWidth="1.300" />
            <path d={tools ? 'M8 13.500l4-3.500 4 3.500' : 'M8 10.500l4 3.500 4-3.500'} strokeWidth="2.600" />
          </svg>
          {title}
        </button>
      </h3>
      {tools && (
        <div className="flex flex-wrap gap-x-0.5 gap-y-0.5 pl-px pt-px pb-px">
          <ToolButtons tools={tools} />
        </div>
      )}
    </section>
  );
}

function Toolbox() {
  return (
    <aside className="w-[225px] shrink-0 ml-[7px] mb-[9px] flex flex-col border border-[#a0a0a0] border-t-0 bg-[#f0f0f0]">
      <PaneTitle title="Toolbox" closable />
      <div className="flex-1 min-h-0 mt-px ml-0.5 mr-1 mb-0.5 bg-linear-to-r from-[#ecf0f7] to-white">
        <div className="h-9 flex items-center gap-px pl-0.5 bg-linear-to-b from-[#fbfbfb] to-[#d6d8da]">
          <ToolButtons
            tools={[
              { name: 'Icons', icon: <Dots />, on: true },
              { name: 'List', icon: <Dots list /> },
            ]}
          />
        </div>
        <Section title="Standard" tools={STANDARD} />
        <Section title="Physical Diagram" tools={PHYSICAL} />
        <Section title="Free Symbols" />
        <Section title="Predefined Symbols" />
      </div>
    </aside>
  );
}

/* ---------- output and status ---------- */

const OUTPUT_TABS = ['General', 'Check Model', 'Generation', 'Reverse', 'Script'];

function OutputTab({ label, active }: { label: string; active: boolean }) {
  const fill = active ? '#ffffff' : '#f0f0f0';
  return (
    <button className="h-5 flex -mr-1">
      <svg width="7" height="20" viewBox="0 0 7 20">
        <path d="M7 0H0l6 20h1z" fill={fill} />
        <path d="M0.500 0l6 20" stroke="#555" />
      </svg>
      <span className={`h-5 px-px leading-[18px] ${active ? 'bg-white' : 'bg-[#f0f0f0]'}`}>{label}</span>
      <svg width="10" height="20" viewBox="0 0 10 20">
        <path d="M0 0h9L3 20H0z" fill={fill} />
        <path d="M9.500 0l-6 20" stroke="#555" />
      </svg>
    </button>
  );
}

function Output() {
  return (
    <section className="shrink-0 border-t border-[#a0a0a0]">
      <PaneTitle title="Output" closable />
      <div className={`flex h-[33px] ${ARIAL}`}>
        <div className="flex-1 bg-white flex items-end pl-px pb-px text-[13px] leading-4">
          Updating model version from 15.2.0.3042 to 16.5.0.3982
        </div>
        <div className="w-[21px] bg-[#f0f0f0]" />
      </div>
      <div className={`flex h-[21px] bg-[#f0f0f0] text-sm ${ARIAL}`}>
        <div className="w-[898px] flex bg-[#c8c8c8] border-t border-r border-black overflow-hidden">
          {['M7 0v10L2 5z', 'M2 0v10l5-5z'].map((d, i) => (
            <button
              key={d}
              aria-label={i ? 'Next tab' : 'Previous tab'}
              className="w-[21px] h-5 flex items-center justify-center bg-[#f0f0f0] border-r border-b border-[#555]"
            >
              <svg width="9" height="10" fill="#8a8a8a">
                <path d={d} />
              </svg>
            </button>
          ))}
          <div className="flex pl-[3px] bg-linear-to-r from-[#f0f0f0] from-5% to-transparent to-5%">
            {OUTPUT_TABS.map((t, i) => (
              <OutputTab key={t} label={t} active={i === 0} />
            ))}
          </div>
        </div>
        <div className="flex-1 ml-0.5 flex items-center border-l border-[#909090] pl-5 pr-[43px]">
          <div className="flex-1 h-1.5 bg-[#858585]" />
        </div>
        <svg width="12" height="12" fill="#bdbdbd" className="-ml-3.5 mr-0.5 self-end">
          <path d="M0 8h3v3H0zM4 8h3v3H4zM8 8h3v3H8zM4 4h3v3H4zM8 4h3v3H8zM8 0h3v3H8z" />
        </svg>
      </div>
    </section>
  );
}

function StatusBar() {
  return (
    <footer className="relative h-10 shrink-0 flex items-center justify-between border-t border-t-[#a0a0a0] border-b border-b-black bg-linear-to-b from-[#fbfcfd] to-[#d6d8da] pl-4 pr-4 text-[15px] leading-5">
      <p className="pb-0.5">Edits the current DBMS definition</p>
      <div className="w-[216px] h-[30px] flex items-center border border-[#7a7a7a] pl-[15px] pb-0.5">Sybase SQL Anywhere 12</div>
      <span className="absolute right-[15px] text-[18px] leading-6 text-[#858585]/80">CSDN @卑微的小g</span>
    </footer>
  );
}

export default function App() {
  return (
    <div className={`relative h-screen flex flex-col overflow-hidden bg-[#f0f0f0] text-black ${UI}`}>
      <TitleBar />
      <MenuBar />
      <ToolBars />
      <div className="flex-1 min-h-0 flex bg-linear-to-r from-[#d6d2c9] to-[#f5f5f5]">
        <ObjectBrowser />
        <DocumentArea />
        <Toolbox />
      </div>
      <Output />
      <StatusBar />
      <ImeBar />
    </div>
  );
}
